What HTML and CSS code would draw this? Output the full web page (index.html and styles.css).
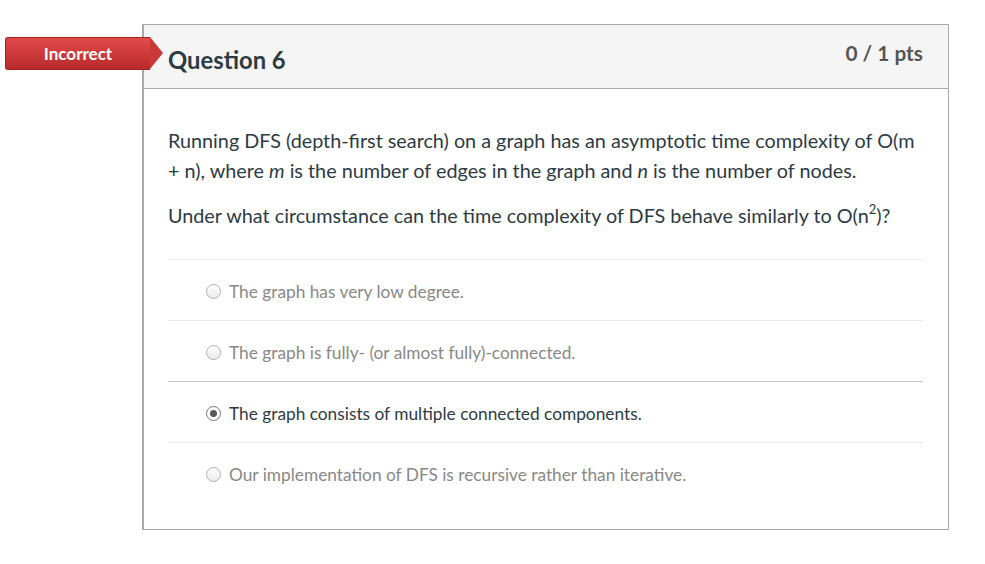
FILE: index.html
```html
<!DOCTYPE html>
<html>
<head>
<meta charset="utf-8">
<link rel="stylesheet" href="styles.css">
</head>
<body>
<div class="page">
  <div class="card">
    <div class="badge"><span class="badge-text">Incorrect</span><span class="badge-tip"></span></div>
    <div class="header">
      <h2 class="title">Question 6</h2>
      <div class="pts">0 / 1 pts</div>
    </div>
    <div class="body">
      <p class="q">Running DFS (depth-first search) on a graph has an asymptotic time complexity of O(m + n), where <em>m</em> is the number of edges in the graph and <em>n</em> is the number of nodes.</p>
      <p class="q q2">Under what circumstance can the time complexity of DFS behave similarly to O(n<sup>2</sup>)?</p>
      <div class="answers">
        <div class="answer"><span class="radio"></span><span class="label">The graph has very low degree.</span></div>
        <div class="answer"><span class="radio"></span><span class="label">The graph is fully- (or almost fully)-connected.</span></div>
        <div class="answer selected"><span class="radio"></span><span class="label">The graph consists of multiple connected components.</span></div>
        <div class="answer"><span class="radio"></span><span class="label">Our implementation of DFS is recursive rather than iterative.</span></div>
      </div>
    </div>
  </div>
</div>
</body>
</html>
```
FILE: styles.css
```css
html, body {
  margin: 0;
  padding: 0;
  background: #fff;
  font-family: Lato, "Open Sans", sans-serif;
  color: #2d3b45;
}
.page {
  padding: 24px 0 0 142px;
}
.card {
  position: relative;
  width: 804px;
  border: 1px solid #aaaaaa;
  border-left: 2px solid #aaaaaa;
  box-sizing: content-box;
}
.badge {
  position: absolute;
  left: -139px;
  top: 12px;
  height: 33px;
  display: flex;
}
.badge-text {
  width: 145px;
  height: 33px;
  box-sizing: border-box;
  background: linear-gradient(#e24a4a, #b82a2a);
  border: 1px solid #a52222;
  border-right: none;
  border-radius: 3px 0 0 3px;
  color: #fff;
  font-weight: 700;
  font-size: 17px;
  line-height: 32px;
  text-align: center;
}
.badge-tip {
  width: 0;
  height: 0;
  border-top: 16.5px solid transparent;
  border-bottom: 16.5px solid transparent;
  border-left: 13px solid #cb3838;
}
.header {
  height: 63px;
  background: #f5f5f5;
  border-bottom: 1px solid #aaaaaa;
  display: flex;
  justify-content: space-between;
  align-items: flex-start;
  padding: 0 25px 0 24px;
}
.title {
  margin: 0;
  font-size: 23.8px;
  font-weight: 700;
  line-height: 26px;
  padding-top: 22px;
  color: #2d3b45;
}
.pts {
  font-size: 20.8px;
  font-weight: 700;
  color: #555;
  line-height: 24px;
  padding-top: 16px;
}
.body {
  padding: 36px 25px 26px 24px;
}
.q {
  margin: 0;
  font-size: 19.8px;
  line-height: 30px;
}
.q2 {
  margin-top: 15px;
}
.q sup {
  font-size: 13px;
  line-height: 0;
  vertical-align: 9px;
}
.answers {
  margin-top: 29px;
}
.answer {
  border-top: 1px solid #e8e8e8;
  display: flex;
  align-items: center;
  padding-left: 38px;
  padding-top: 3px;
  box-sizing: content-box;
  height: 57px;
  font-size: 17.3px;
  color: #888;
}
.answer.selected {
  border-top-color: #c8c8c8;
  color: #2d3b45;
}
.radio {
  width: 15px;
  height: 15px;
  border: 1px solid #b0b0b0;
  border-radius: 50%;
  background: linear-gradient(#fdfdfd, #ececec);
  margin-right: 8px;
  position: relative;
  flex: none;
  box-sizing: border-box;
}
.selected .radio {
  border-color: #777;
  background: #fff;
}
.selected .radio::after {
  content: "";
  position: absolute;
  left: 3px;
  top: 3px;
  width: 7px;
  height: 7px;
  border-radius: 50%;
  background: #5a5a5a;
}
.label {
  line-height: 20px;
}
```
